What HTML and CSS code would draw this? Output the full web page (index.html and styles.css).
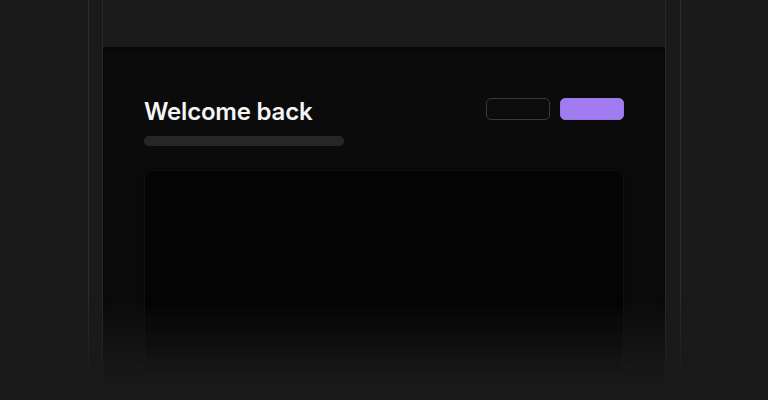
FILE: index.html
```html
<!DOCTYPE html>
<html lang="en">
<head>
    <meta charset="UTF-8">
    <meta name="viewport" content="width=device-width, initial-scale=1.0">
    <title>Dashboard</title>
    <link rel="stylesheet" href="styles.css">
</head>
<body>
    <div class="frame">
        <div class="app">
            <!-- Top bar -->
            <div class="topbar"></div>

            <!-- Main area -->
            <main class="main">
                <div class="page-head">
                    <div class="titles">
                        <h1>Welcome back</h1>
                        <div class="skeleton"></div>
                    </div>
                    <div class="actions">
                        <button class="btn btn-outline"></button>
                        <button class="btn btn-primary"></button>
                    </div>
                </div>

                <div class="card"></div>
            </main>
        </div>
    </div>

    <!-- Fade at the bottom of the viewport -->
    <div class="fade"></div>
</body>
</html>
```

FILE: styles.css
```css
/* Reset */
body, h1 {
    margin: 0;
    padding: 0;
}

* {
    box-sizing: border-box;
}

body {
    font-family: 'Inter', 'Liberation Sans', sans-serif;
    background: #1a1a1a;
    height: 400px;
    overflow: hidden;
    color: #fff;
}

.frame {
    width: 593px;
    height: 400px;
    margin: 0 0 0 88px;
    padding: 0 14px 0 13px;
    border-left: 1px solid #2b2b2b;
    border-right: 1px solid #2b2b2b;
}

.app {
    height: 100%;
    border-left: 1px solid #282828;
    border-right: 1px solid #282828;
    display: flex;
    flex-direction: column;
}

.topbar {
    height: 47px;
    background: #1b1b1b;
    flex-shrink: 0;
}

.main {
    flex: 1;
    background: #0b0b0b;
    padding: 51px 41px 0 41px;
    box-shadow: inset 0 6px 8px -4px rgba(0, 0, 0, 0.5);
}

.page-head {
    display: flex;
    justify-content: space-between;
    align-items: flex-start;
}

h1 {
    font-size: 24px;
    font-weight: 600;
    line-height: 28px;
    letter-spacing: -0.2px;
    color: #f5f5f5;
}

.skeleton {
    width: 200px;
    height: 10px;
    margin-top: 10px;
    border-radius: 5px;
    background: #262626;
}

.actions {
    display: flex;
    gap: 10px;
}

.btn {
    width: 64px;
    height: 22px;
    border-radius: 5px;
    padding: 0;
    cursor: pointer;
}

.btn-outline {
    background: #0c0c0c;
    border: 1px solid #3a3a3a;
}

.btn-primary {
    background: #a07cf0;
    border: 1px solid #9b75ec;
}

.card {
    margin-top: 24px;
    height: 200px;
    border-radius: 8px;
    background: #040404;
    border: 1px solid #0f0f0f;
    box-shadow: 0 0 6px rgba(0, 0, 0, 0.4);
}

.fade {
    position: fixed;
    left: 0;
    right: 0;
    bottom: 0;
    height: 100px;
    background: linear-gradient(to bottom, rgba(26, 26, 26, 0), #1a1a1a 85%);
    pointer-events: none;
}
```
